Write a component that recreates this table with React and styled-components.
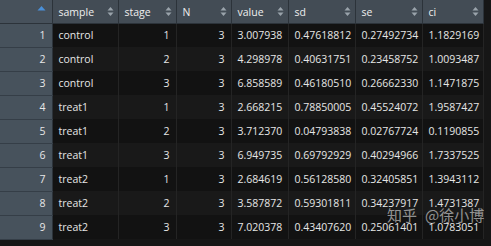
import React from 'react'
import styled, { createGlobalStyle } from 'styled-components';

const GlobalStyle = createGlobalStyle`
  html, body {
    margin: 0;
    padding: 0;
    background: #161616;
  }
  body {
    font-family: "Open Sans", "Noto Sans", "Noto Sans CJK SC", sans-serif;
  }
`;

const columns = [
  { key: "sample", width: 66, align: "left" },
  { key: "stage", width: 58, align: "right" },
  { key: "N", width: 55, align: "right" },
  { key: "value", width: 57, align: "right" },
  { key: "sd", width: 67, align: "right" },
  { key: "se", width: 67, align: "right" },
  { key: "ci", width: 61, align: "right" },
];

const rows = [
  ["control", "1", "3", "3.007938", "0.47618812", "0.27492734", "1.1829169"],
  ["control", "2", "3", "4.298978", "0.40631751", "0.23458752", "1.0093487"],
  ["control", "3", "3", "6.858589", "0.46180510", "0.26662330", "1.1471875"],
  ["treat1", "1", "3", "2.668215", "0.78850005", "0.45524072", "1.9587427"],
  ["treat1", "2", "3", "3.712370", "0.04793838", "0.02767724", "0.1190855"],
  ["treat1", "3", "3", "6.949735", "0.69792929", "0.40294966", "1.7337525"],
  ["treat2", "1", "3", "2.684619", "0.56128580", "0.32405851", "1.3943112"],
  ["treat2", "2", "3", "3.587872", "0.59301811", "0.34237917", "1.4731387"],
  ["treat2", "3", "3", "7.020378", "0.43407620", "0.25061401", "1.0783051"],
];

function SortIcon({ active }) {
  if (active) {
    return (
      <svg width="9" height="6" viewBox="0 0 9 6">
        <path d="M0.5 5.5 L4.5 1 L8.5 5.5 Z" fill="#4a90d9" />
      </svg>
    );
  }
  return (
    <svg width="7" height="11" viewBox="0 0 7 11">
      <path d="M0.5 4.5 L3.5 1 L6.5 4.5 Z" fill="#9aa3ab" />
      <path d="M0.5 6.5 L3.5 10 L6.5 6.5 Z" fill="#9aa3ab" />
    </svg>
  );
}

export default function App() {
  return (
    <Page>
      <GlobalStyle />
      <Grid>
        <thead>
          <tr>
            <IndexHead>
              <SortIcon active />
            </IndexHead>
            {columns.map((c) => (
              <HeadCell key={c.key} $width={c.width}>
                <span>{c.key}</span>
                <SortIcon />
              </HeadCell>
            ))}
          </tr>
        </thead>
        <tbody>
          {rows.map((r, i) => (
            <Row key={i} $odd={i % 2 === 0}>
              <IndexCell>{i + 1}</IndexCell>
              {r.map((v, j) => (
                <Cell key={j} $align={columns[j].align}>{v}</Cell>
              ))}
            </Row>
          ))}
        </tbody>
      </Grid>
      <Watermark>
        <span>知乎</span>
        <span>@徐小博</span>
      </Watermark>
    </Page>
  )
}

const Page = styled.div`
  position: relative;
  width: 491px;
  height: 246px;
  background: #161616;
  overflow: hidden;
`;

const Grid = styled.table`
  border-collapse: collapse;
  table-layout: fixed;
  width: 483px;
  font-size: 10.5px;
  color: #e6e6e6;
`;

const IndexHead = styled.th`
  width: 52px;
  height: 23px;
  padding: 0 6px 0 0;
  box-sizing: border-box;
  background: #47515b;
  border-right: 1px solid #2c333a;
  border-bottom: 1px solid #2c333a;
  text-align: right;
  vertical-align: top;
  svg {
    margin-top: 5px;
  }
`;

const HeadCell = styled.th`
  width: ${(p) => p.$width}px;
  height: 23px;
  padding: 0 4px 0 6px;
  box-sizing: border-box;
  background: #434c55;
  border-right: 1px solid #2c333a;
  border-bottom: 1px solid #2c333a;
  font-weight: normal;
  text-align: left;
  color: #eeeeee;
  > span {
    display: inline-block;
    padding-top: 2px;
  }
  svg {
    float: right;
    margin-top: 3px;
  }
`;

const Row = styled.tr`
  height: 24px;
  background: ${(p) => (p.$odd ? "#121212" : "#191919")};
`;

const IndexCell = styled.td`
  background: #47525c;
  border-bottom: 1px solid #353e47;
  border-right: 1px solid #2c333a;
  padding: 0 6px 0 0;
  text-align: right;
  color: #e8e8e8;
`;

const Cell = styled.td`
  padding: 0 6px;
  text-align: ${(p) => p.$align};
  border-right: 1px solid #242424;
  white-space: nowrap;
  overflow: hidden;
`;

const Watermark = styled.div`
  position: absolute;
  left: 387px;
  top: 204px;
  display: flex;
  gap: 8px;
  font-size: 15px;
  line-height: 21px;
  color: rgba(255, 255, 255, 0.55);
  font-family: "Noto Sans CJK SC", "Noto Sans", sans-serif;
  white-space: nowrap;
`;
